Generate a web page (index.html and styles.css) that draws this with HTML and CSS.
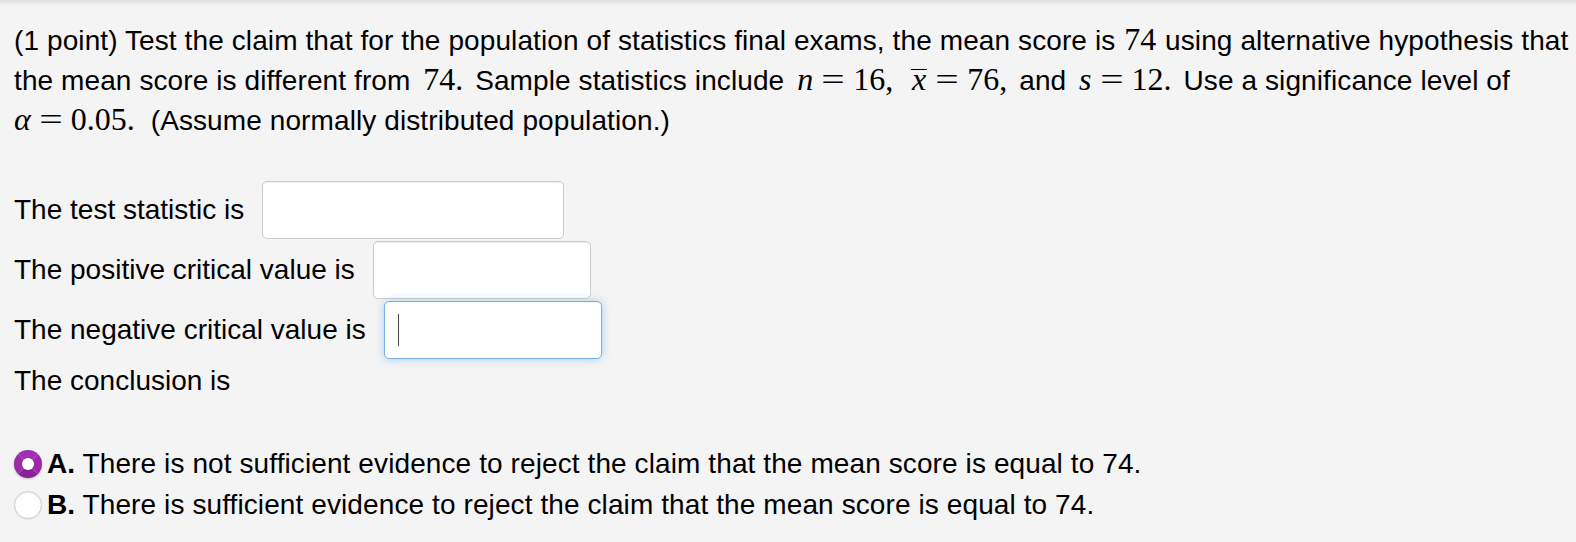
FILE: index.html
```html
<!DOCTYPE html>
<html lang="en">
<head>
<meta charset="utf-8">
<title>Hypothesis test</title>
<link rel="stylesheet" href="styles.css">
</head>
<body>
<div class="page">
  <p class="question">(1 point) Test the claim that for the population of statistics final exams, the mean score is <span class="m m-tight"><span class="mn">74</span></span> using alternative hypothesis that<br>the mean score is different from <span class="m"><span class="mn">74.</span></span> Sample statistics include <span class="m"><span class="mi">n</span><span class="mo">=</span><span class="mn">16,</span></span> <span class="m"><span class="mi xbar">x</span><span class="mo">=</span><span class="mn">76,</span></span> and <span class="m"><span class="mi">s</span><span class="mo">=</span><span class="mn">12.</span></span> Use a significance level of<br><span class="m m-first"><span class="mi">α</span><span class="mo">=</span><span class="mn">0.05.</span></span> (Assume normally distributed population.)</p>

  <div class="answers">
    <label class="row"><span class="lbl">The test statistic is</span><input class="box box-wide" type="text"></label>
    <label class="row"><span class="lbl">The positive critical value is</span><input class="box" type="text"></label>
    <label class="row"><span class="lbl">The negative critical value is</span><span class="box box-focus"><span class="caret"></span></span></label>
    <div class="conclusion">The conclusion is</div>
  </div>

  <div class="choices">
    <label class="choice"><span class="radio radio-on"></span><span class="ctext"><b>A.</b> There is not sufficient evidence to reject the claim that the mean score is equal to 74.</span></label>
    <label class="choice"><span class="radio"></span><span class="ctext"><b>B.</b> There is sufficient evidence to reject the claim that the mean score is equal to 74.</span></label>
  </div>
</div>
</body>
</html>
```

FILE: styles.css
```css
html, body {
  margin: 0;
  padding: 0;
  background: #f4f4f4;
}
body {
  background: linear-gradient(#dcdcdc 0, #ebebeb 3px, #f4f4f4 6px, #f4f4f4 100%);
  min-height: 542px;
  font-family: "Liberation Sans", Arial, Helvetica, sans-serif;
  font-size: 28px;
  letter-spacing: 0.1px;
  color: #000;
}
.page {
  padding: 21px 0 0 14px;
}
.question {
  margin: 0;
  line-height: 40px;
  white-space: nowrap;
}
.m {
  font-family: "Liberation Serif", "Times New Roman", serif;
  font-size: 32px;
  line-height: 1;
  letter-spacing: 0;
  margin: 0 4px 0 5px;
}
.m-tight {
  margin: 0 1px;
}
.m-first {
  margin: 0 8px 0 0;
}
.mi {
  font-style: italic;
}
.mo {
  display: inline-block;
  transform: scaleX(1.3);
  margin: 0 11px;
}
.xbar {
  display: inline-block;
  line-height: 18px;
  border-top: 1.5px solid #000;
  padding: 0 1px;
  margin-left: 1px;
}
.answers {
  margin-top: 40px;
  display: flex;
  flex-direction: column;
  gap: 2px;
  letter-spacing: 0;
}
.row {
  display: flex;
  align-items: center;
  height: 58px;
}
.lbl {
  margin-right: 18px;
}
.box {
  box-sizing: border-box;
  width: 218px;
  height: 58px;
  border: 1.5px solid #cccccc;
  border-radius: 5px;
  background: #fff;
  box-shadow: inset 0 1px 1px rgba(0,0,0,0.06);
  font: inherit;
  padding: 0 12px;
  outline: none;
}
.box-wide {
  width: 302px;
}
.box-focus {
  display: flex;
  align-items: center;
  border: 1.5px solid #74b3e8;
  box-shadow: inset 0 1px 1px rgba(0,0,0,0.05), 0 0 8px rgba(102,175,233,0.55);
}
.caret {
  width: 1.5px;
  height: 32px;
  background: #444;
  margin-left: 1px;
}
.conclusion {
  line-height: 40px;
  height: 40px;
}
.choices {
  margin-top: 42px;
  display: flex;
  flex-direction: column;
}
.choice {
  display: flex;
  align-items: center;
  height: 41px;
}
.radio {
  box-sizing: border-box;
  width: 28px;
  height: 28px;
  border-radius: 50%;
  border: 1px solid #cfcfcf;
  background: #fff;
  box-shadow: inset 0 1px 2px rgba(0,0,0,0.08), 0 1px 1px rgba(0,0,0,0.06);
  margin-right: 5px;
  flex: none;
}
.radio-on {
  border: 8px solid #9a2aa8;
  background: #fff;
  box-shadow: 0 1px 2px rgba(0,0,0,0.25);
  border-color: #a030b0 #9a2aa8 #8c209a;
}
.ctext b {
  font-weight: bold;
}
```
